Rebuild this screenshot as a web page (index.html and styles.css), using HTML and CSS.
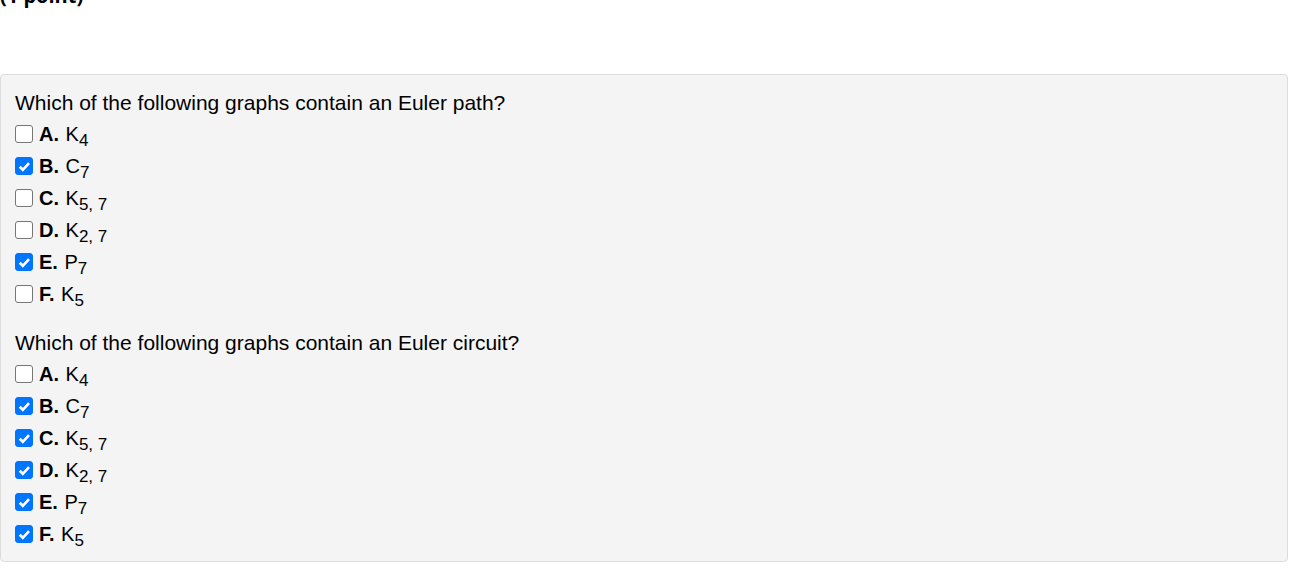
FILE: index.html
```html
<!DOCTYPE html>
<html>
<head>
<meta charset="utf-8">
<link rel="stylesheet" href="styles.css">
</head>
<body>
<div class="points">(1 point)</div>
<div class="box">
  <div class="q">Which of the following graphs contain an Euler path?</div>
  <div class="opt"><span class="cb"></span><span class="lbl"><b>A.</b> K<sub>4</sub></span></div>
  <div class="opt"><span class="cb on"><svg viewBox="0 0 18 18"><path d="M4 9.3l3.2 3.2 6.6-7" /></svg></span><span class="lbl"><b>B.</b> C<sub>7</sub></span></div>
  <div class="opt"><span class="cb"></span><span class="lbl"><b>C.</b> K<sub>5, 7</sub></span></div>
  <div class="opt"><span class="cb"></span><span class="lbl"><b>D.</b> K<sub>2, 7</sub></span></div>
  <div class="opt"><span class="cb on"><svg viewBox="0 0 18 18"><path d="M4 9.3l3.2 3.2 6.6-7" /></svg></span><span class="lbl"><b>E.</b> P<sub>7</sub></span></div>
  <div class="opt"><span class="cb"></span><span class="lbl"><b>F.</b> K<sub>5</sub></span></div>

  <div class="q q2">Which of the following graphs contain an Euler circuit?</div>
  <div class="opt"><span class="cb"></span><span class="lbl"><b>A.</b> K<sub>4</sub></span></div>
  <div class="opt"><span class="cb on"><svg viewBox="0 0 18 18"><path d="M4 9.3l3.2 3.2 6.6-7" /></svg></span><span class="lbl"><b>B.</b> C<sub>7</sub></span></div>
  <div class="opt"><span class="cb on"><svg viewBox="0 0 18 18"><path d="M4 9.3l3.2 3.2 6.6-7" /></svg></span><span class="lbl"><b>C.</b> K<sub>5, 7</sub></span></div>
  <div class="opt"><span class="cb on"><svg viewBox="0 0 18 18"><path d="M4 9.3l3.2 3.2 6.6-7" /></svg></span><span class="lbl"><b>D.</b> K<sub>2, 7</sub></span></div>
  <div class="opt"><span class="cb on"><svg viewBox="0 0 18 18"><path d="M4 9.3l3.2 3.2 6.6-7" /></svg></span><span class="lbl"><b>E.</b> P<sub>7</sub></span></div>
  <div class="opt"><span class="cb on"><svg viewBox="0 0 18 18"><path d="M4 9.3l3.2 3.2 6.6-7" /></svg></span><span class="lbl"><b>F.</b> K<sub>5</sub></span></div>
</div>
</body>
</html>
```
FILE: styles.css
```css
html, body {
  margin: 0;
  padding: 0;
  background: #fff;
}
body {
  font-family: "Liberation Sans", Arial, sans-serif;
  font-size: 20px;
  color: #000;
  width: 1288px;
}
.points {
  font-family: "Open Sans", sans-serif;
  font-weight: bold;
  font-size: 20px;
  line-height: 20px;
  margin-top: -14px;
  height: 20px;
  margin-bottom: 68px;
}
.box {
  background: #f4f4f4;
  border: 1px solid #dcdcdc;
  border-radius: 4px;
  padding: 16px 14px 11px 14px;
}
.q {
  font-size: 21px;
  line-height: 24px;
  margin-bottom: 3px;
}
.q2 {
  margin-top: 21px;
}
.opt {
  display: flex;
  align-items: center;
  height: 32px;
}
.lbl {
  line-height: 32px;
  white-space: nowrap;
}
.lbl b {
  margin-right: 1px;
}
.lbl sub {
  font-size: 17px;
  vertical-align: -5px;
  line-height: 0;
}
.cb {
  box-sizing: border-box;
  width: 18px;
  height: 18px;
  border: 1.5px solid #767676;
  border-radius: 3px;
  background: #fff;
  margin: 0 6px 0 0;
  display: inline-flex;
  align-items: center;
  justify-content: center;
  flex: none;
}
.cb.on {
  background: #0075ff;
  border-color: #0075ff;
}
.cb svg {
  width: 17px;
  height: 17px;
  flex: none;
}
.cb path {
  fill: none;
  stroke: #fff;
  stroke-width: 2.8;
}
```
